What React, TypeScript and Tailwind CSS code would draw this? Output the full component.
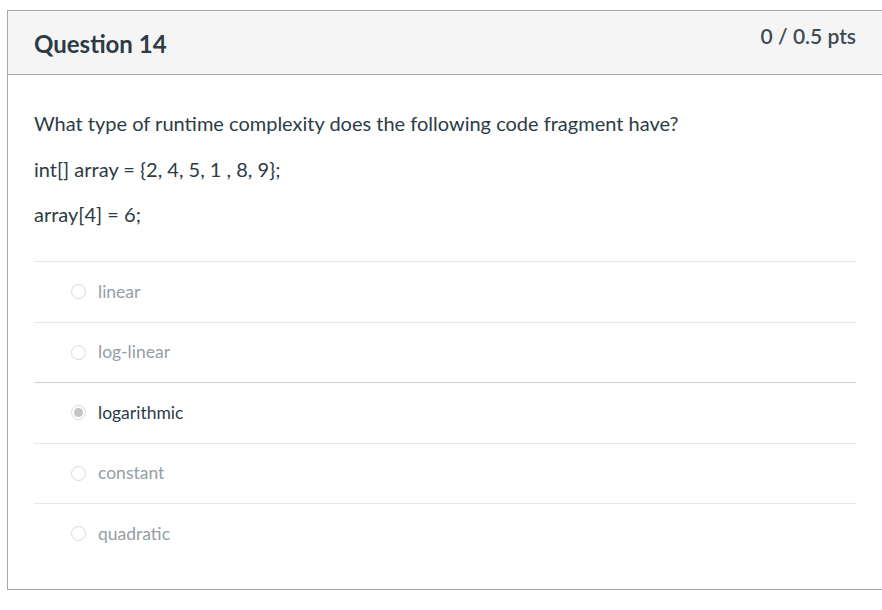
const answers = [
  { label: "linear", selected: false },
  { label: "log-linear", selected: false },
  { label: "logarithmic", selected: true },
  { label: "constant", selected: false },
  { label: "quadratic", selected: false },
];

function Radio({ checked }: { checked: boolean }) {
  return (
    <span className="flex h-[15px] w-[15px] shrink-0 items-center justify-center rounded-full border border-[#d6d9dc] bg-white">
      {checked && <span className="h-[9px] w-[9px] rounded-full bg-[#c4c4c4]" />}
    </span>
  );
}

export default function App() {
  return (
    <div className="min-h-screen bg-white font-['Lato','Noto_Sans',sans-serif] text-[#2d3b45]">
      <div className="ml-[7px] pt-[10px]">
        <div className="border-y border-l border-[#a8a8a8]">
          <div className="flex h-[64px] justify-between border-b border-[#a8a8a8] bg-[#f5f5f5] px-[26px]">
            <h2 className="self-center pt-[3px] text-[24px] font-bold leading-none">Question 14</h2>
            <div className="pt-[14px] text-[21px] font-semibold leading-none text-[#3d4a53]">0 / 0.5 pts</div>
          </div>
          <div className="px-[26px] pt-[33px] pb-[25px]">
            <p className="mb-[15.5px] text-[20px] leading-[30px]">
              What type of runtime complexity does the following code fragment have?
            </p>
            <p className="mb-[15.5px] text-[20px] leading-[30px]">int[] array = {"{"}2, 4, 5, 1 , 8, 9{"}"};</p>
            <p className="text-[20px] leading-[30px]">array[4] = 6;</p>
            <div className="mt-[32px]">
              {answers.map((a) => (
                <div
                  key={a.label}
                  className={
                    a.selected
                      ? "flex h-[60.5px] items-center gap-[12px] border-t border-[#d0d0d0] pl-[37px]"
                      : "flex h-[60.5px] items-center gap-[12px] border-t border-[#e8e8e8] pl-[37px]"
                  }
                >
                  <Radio checked={a.selected} />
                  <span
                    className={
                      a.selected ? "text-[17.5px] text-[#2d3b45]" : "text-[17.5px] text-[#959ea4]"
                    }
                  >
                    {a.label}
                  </span>
                </div>
              ))}
            </div>
          </div>
        </div>
      </div>
    </div>
  );
}
